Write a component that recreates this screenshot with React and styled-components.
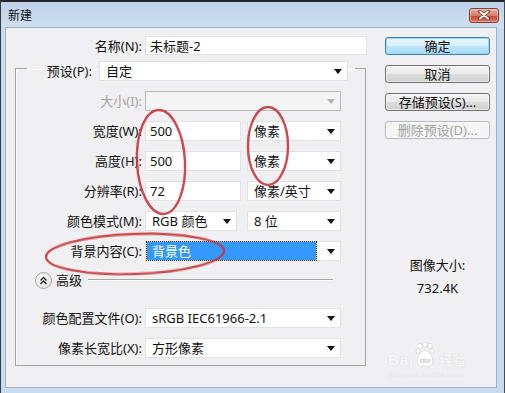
import React from "react";
import styled, { createGlobalStyle } from "styled-components";

const GlobalStyle = createGlobalStyle`
    html, body {
        margin: 0;
        padding: 0;
        background: #1e1e1e;
    }
    body {
        font-family: "Noto Sans", "Noto Sans CJK SC", sans-serif;
        font-size: 13px;
    }
`;

const Window = styled.div`
    position: relative;
    box-sizing: border-box;
    width: 505px;
    height: 393px;
    display: flex;
    flex-direction: column;
    padding: 0 7px 5px 4px;
    border-top: 2px solid #262626;
    border-left: 1px solid #3a3a3a;
    border-right: 1px solid #4a4a4a;
    background: linear-gradient(#bcd2ea 0px, #cfdff0 26px, #c9dcef 27px, #c9dcef 100%);
    overflow: hidden;
`;

const TitleBar = styled.div`
    height: 25px;
    display: flex;
    align-items: center;
    justify-content: space-between;
`;

const Title = styled.span`
    padding-left: 3px;
    font-family: "Noto Sans CJK SC", sans-serif;
    font-size: 12px;
    color: #111;
`;

const CloseButton = styled.div`
    box-sizing: border-box;
    width: 30px;
    height: 15px;
    margin-right: -2px;
    margin-top: 1px;
    display: flex;
    align-items: center;
    justify-content: center;
    border: 1px solid #8a3b2f;
    border-radius: 3px;
    background: linear-gradient(#e8b0a4, #d77a66 50%, #c5472f 51%, #d2755f);
    box-shadow: inset 0 0 0 1px rgba(255, 255, 255, 0.35);
`;

const Body = styled.div`
    flex: 1;
    display: flex;
    gap: 18px;
    padding: 0 6px 0 9px;
    background: #f0eff1;
    border: 1px solid #9fb1c6;
    color: #111;
`;

const FormColumn = styled.div`
    width: 352px;
    display: flex;
    flex-direction: column;
`;

const NameRow = styled.div`
    display: flex;
    align-items: center;
    margin-top: 8px;
    height: 19px;
`;

const Label = styled.label`
    width: ${(p) => p.$width || 126}px;
    margin-right: ${(p) => p.$gap || 3}px;
    flex-shrink: 0;
    text-align: right;
    line-height: 18px;
    white-space: nowrap;
    font-family: "Noto Sans", "Noto Sans CJK SC", sans-serif;
    color: ${(p) => (p.$disabled ? "#a3a3a3" : "#111")};
`;

const TextInput = styled.input`
    box-sizing: border-box;
    width: ${(p) => p.$width}px;
    height: ${(p) => p.$height || 20}px;
    margin: 0 ${(p) => p.$gap || 0}px 0 0;
    padding: 0 4px;
    border: 1px solid #e2e2e2;
    background: #fff;
    font-family: "Noto Sans", "Noto Sans CJK SC", sans-serif;
    font-size: 13px;
    color: #111;
    outline: none;
`;

const Group = styled.fieldset`
    box-sizing: border-box;
    width: 351px;
    margin: 0;
    padding: 0 0 7px 0;
    border: 1px solid #a3a3a3;
    box-shadow: inset 1px 1px 0 #fbfbfb;
`;

const Legend = styled.legend`
    box-sizing: border-box;
    width: 328px;
    margin-left: 11px;
    padding: 6px 7px 0 0;
    display: flex;
    align-items: center;
`;

const Rows = styled.div`
    display: flex;
    flex-direction: column;
    gap: 10px;
    padding-top: 10px;
`;

const Row = styled.div`
    display: flex;
    align-items: center;
    height: 20px;
    margin-top: ${(p) => p.$top || 0}px;
`;

const SelectBox = styled.div`
    box-sizing: border-box;
    width: ${(p) => p.$width}px;
    height: ${(p) => p.$height || 20}px;
    margin-right: ${(p) => p.$gap || 0}px;
    display: flex;
    align-items: center;
    padding: 0 5px 0 1px;
    border: 1px solid ${(p) => (p.$disabled ? "#b9b9b9" : "#e2e2e2")};
    background: ${(p) => (p.$disabled ? "#f4f4f5" : "#fff")};
    flex-shrink: 0;
`;

const SelectValue = styled.span`
    flex: 1;
    height: 100%;
    display: flex;
    align-items: center;
    padding-left: 5px;
    box-sizing: border-box;
    line-height: 18px;
    white-space: nowrap;
    color: ${(p) => (p.$selected ? "#fff" : "#111")};
    background: ${(p) => (p.$selected ? "#3399ff" : "transparent")};
    outline: ${(p) => (p.$selected ? "1px dotted #20242a" : "none")};
    margin: ${(p) => (p.$selected ? "1px 9px 1px 0" : "0")};
`;

const Arrow = styled.span`
    width: 0;
    height: 0;
    margin-left: 2px;
    border-left: 4px solid transparent;
    border-right: 4px solid transparent;
    border-top: 5px solid ${(p) => (p.$disabled ? "#b0b0b0" : "#111")};
`;

const AdvancedRow = styled.div`
    display: flex;
    align-items: center;
    height: 20px;
    margin-top: 9px;
    padding-left: 19px;
    padding-right: 32px;
`;

const RoundToggle = styled.span`
    box-sizing: border-box;
    width: 17px;
    height: 17px;
    border-radius: 50%;
    border: 1px solid #a8a8a8;
    background: radial-gradient(circle at 40% 35%, #ffffff, #e6e6e6 70%, #d0d0d0);
    display: flex;
    align-items: center;
    justify-content: center;
`;

const AdvancedText = styled.span`
    margin-left: 4px;
    font-family: "Noto Sans CJK SC", sans-serif;
    line-height: 18px;
`;

const Rule = styled.span`
    flex: 1;
    height: 1px;
    margin-left: 6px;
    background: #a6a6a6;
    border-bottom: 1px solid #fafafa;
`;

const SideColumn = styled.div`
    width: 105px;
    display: flex;
    flex-direction: column;
    gap: 10px;
    padding-top: 9px;
`;

const Button = styled.button`
    box-sizing: border-box;
    width: 105px;
    height: 18px;
    padding: 0;
    border-radius: 3px;
    font-family: "Noto Sans", "Noto Sans CJK SC", sans-serif;
    font-size: 13px;
    line-height: 16px;
    color: ${(p) => (p.disabled ? "#a2a2a2" : "#111")};
    border: 1px solid ${(p) => (p.$primary ? "#3c7fb1" : p.disabled ? "#b5b9bc" : "#707070")};
    background: ${(p) =>
        p.$primary
            ? "linear-gradient(#eaf6fd, #d9f0fc 50%, #bee6fd 51%, #a7d9f5)"
            : p.disabled
            ? "#f4f4f4"
            : "linear-gradient(#f2f2f2, #ebebeb 50%, #dddddd 51%, #cfcfcf)"};
    box-shadow: ${(p) =>
        p.$primary ? "inset 0 0 0 1px #9fdcfb" : "inset 0 0 0 1px rgba(255,255,255,0.6)"};
`;

const SizeInfo = styled.div`
    margin-top: 107px;
    display: flex;
    flex-direction: column;
    align-items: center;
    gap: 5px;
    line-height: 18px;
`;

const Overlay = styled.svg`
    position: absolute;
    left: 0;
    top: 0;
    pointer-events: none;
`;

const Watermark = styled.div`
    position: absolute;
    left: 387px;
    top: 340px;
    display: flex;
    flex-direction: column;
    align-items: center;
    color: rgba(255, 255, 255, 0.85);
    text-shadow: 0 0 1px rgba(120, 120, 120, 0.3);
    pointer-events: none;
`;

const MarkTop = styled.div`
    display: flex;
    align-items: flex-end;
    gap: 1px;
`;

const MarkBai = styled.span`
    font-family: "Liberation Sans", sans-serif;
    font-weight: bold;
    font-size: 15px;
    line-height: 16px;
    letter-spacing: 1px;
`;

const MarkJingyan = styled.span`
    font-family: "Noto Sans CJK SC", sans-serif;
    font-weight: bold;
    font-size: 13px;
    line-height: 16px;
    margin-left: 3px;
`;

const MarkUrl = styled.span`
    font-family: "Liberation Sans", sans-serif;
    font-size: 8px;
    margin-top: 2px;
    letter-spacing: 0.6px;
    color: rgba(255, 255, 255, 0.7);
`;

const Select = ({ width, value, disabled, selected, gap }) => (
    <SelectBox $width={width} $disabled={disabled} $gap={gap}>
        <SelectValue $selected={selected}>{value}</SelectValue>
        <Arrow $disabled={disabled} />
    </SelectBox>
);

const App = () => {
    return (
        <>
            <GlobalStyle />
            <Window>
                <TitleBar>
                    <Title>新建</Title>
                    <CloseButton>
                        <svg width="12" height="10" viewBox="0 0 12 10">
                            <path d="M2 1.5 L10 8.5 M10 1.5 L2 8.5" stroke="#6b2a20" strokeWidth="3.4" strokeLinecap="round" />
                            <path d="M2 1.5 L10 8.5 M10 1.5 L2 8.5" stroke="#fff" strokeWidth="2" strokeLinecap="round" />
                        </svg>
                    </CloseButton>
                </TitleBar>
                <Body>
                    <FormColumn>
                        <NameRow>
                            <Label $width={127}>名称(N):</Label>
                            <TextInput $width={222} $height={19} readOnly defaultValue="未标题-2" />
                        </NameRow>
                        <Group>
                            <Legend>
                                <Label $width={65} $gap={7}>预设(P):</Label>
                                <Select width={249} value="自定" />
                            </Legend>
                            <Rows>
                                <Row>
                                    <Label $disabled>大小(I):</Label>
                                    <Select width={196} value="" disabled />
                                </Row>
                                <Row>
                                    <Label>宽度(W):</Label>
                                    <TextInput $width={96} $gap={6} readOnly defaultValue="500" />
                                    <Select width={94} value="像素" />
                                </Row>
                                <Row>
                                    <Label>高度(H):</Label>
                                    <TextInput $width={96} $gap={6} readOnly defaultValue="500" />
                                    <Select width={94} value="像素" />
                                </Row>
                                <Row>
                                    <Label>分辨率(R):</Label>
                                    <TextInput $width={96} $gap={6} readOnly defaultValue="72" />
                                    <Select width={94} value="像素/英寸" />
                                </Row>
                                <Row>
                                    <Label>颜色模式(M):</Label>
                                    <Select width={92} value="RGB 颜色" gap={10} />
                                    <Select width={94} value="8 位" />
                                </Row>
                                <Row>
                                    <Label>背景内容(C):</Label>
                                    <Select width={196} value="背景色" selected />
                                </Row>
                            </Rows>
                            <AdvancedRow>
                                <RoundToggle>
                                    <svg width="9" height="9" viewBox="0 0 9 9">
                                        <path d="M1.5 4.5 L4.5 1.5 L7.5 4.5 M1.5 8 L4.5 5 L7.5 8" fill="none" stroke="#222" strokeWidth="1.4" />
                                    </svg>
                                </RoundToggle>
                                <AdvancedText>高级</AdvancedText>
                                <Rule />
                            </AdvancedRow>
                            <Row $top={18}>
                                <Label>颜色配置文件(O):</Label>
                                <Select width={196} value="sRGB IEC61966-2.1" />
                            </Row>
                            <Row $top={10}>
                                <Label>像素长宽比(X):</Label>
                                <Select width={196} value="方形像素" />
                            </Row>
                        </Group>
                    </FormColumn>
                    <SideColumn>
                        <Button $primary>确定</Button>
                        <Button>取消</Button>
                        <Button>存储预设(S)...</Button>
                        <Button disabled>删除预设(D)...</Button>
                        <SizeInfo>
                            <span>图像大小:</span>
                            <span>732.4K</span>
                        </SizeInfo>
                    </SideColumn>
                </Body>
                <Overlay width="505" height="393" viewBox="0 0 505 393">
                    <g fill="none" stroke="#c8363a" strokeWidth="2.4" opacity="0.9">
                        <ellipse cx="160" cy="160" rx="24" ry="52" transform="rotate(-3 160 160)" />
                        <ellipse cx="267" cy="144" rx="20" ry="39" />
                        <ellipse cx="134" cy="252" rx="89" ry="20" transform="rotate(-2 134 252)" />
                    </g>
                </Overlay>
                <Watermark>
                    <MarkTop>
                        <MarkBai>Bai</MarkBai>
                        <svg width="20" height="26" viewBox="0 0 20 26">
                            <g fill="rgba(255,255,255,0.85)" stroke="rgba(140,140,140,0.35)" strokeWidth="0.6">
                                <ellipse cx="5" cy="4" rx="2.2" ry="2.8" />
                                <ellipse cx="10" cy="2.6" rx="2.2" ry="2.6" />
                                <ellipse cx="15" cy="4" rx="2.2" ry="2.8" />
                                <ellipse cx="3" cy="9" rx="2" ry="2.4" />
                                <ellipse cx="17" cy="9" rx="2" ry="2.4" />
                                <path d="M10 8 C5 10 2 15 2 20 C2 24 6 25 10 24 C14 25 18 24 18 20 C18 15 15 10 10 8 Z" />
                            </g>
                            <text x="10" y="21" textAnchor="middle" fontFamily="Liberation Sans, sans-serif" fontWeight="bold" fontSize="8" fill="#d9d9d9">du</text>
                        </svg>
                        <MarkJingyan>经验</MarkJingyan>
                    </MarkTop>
                    <MarkUrl>jingyan.baidu.com</MarkUrl>
                </Watermark>
            </Window>
        </>
    );
};

export default App;
